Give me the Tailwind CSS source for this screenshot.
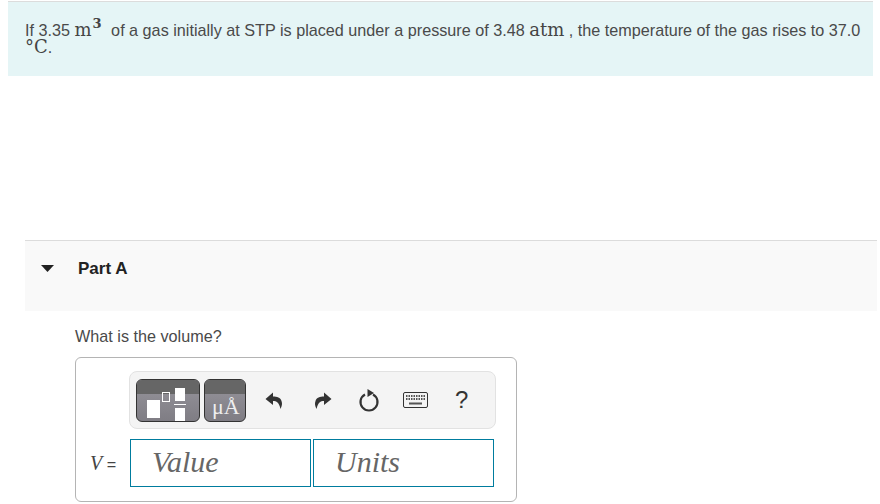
<!DOCTYPE html>
<html lang="en">
<head>
  <meta charset="UTF-8" />
  <title>Part A</title>
  <script src="https://cdn.jsdelivr.net/npm/@tailwindcss/browser@4"></script>
</head>
<body class="bg-white text-[#4a4a4a] font-['Liberation_Sans',sans-serif] text-[16.2px] overflow-hidden">
  <div class="w-[880px] h-[504px] overflow-hidden pt-px">
    <!-- intro -->
    <div class="ml-2 w-[865px] h-[75px] bg-[#e5f5f6] border-t border-[#dcdcdc] pl-[17px] pt-[18px] leading-[20px]">
      <p class="whitespace-nowrap">If 3.35 <span class="font-['DejaVu_Serif',serif] text-[18px] leading-none text-[#444]">m<sup class="text-[13px] font-bold leading-none -top-[8px] ml-px mr-[5px]">3</sup></span> of a gas initially at STP is placed under a pressure of 3.48 <span class="font-['DejaVu_Serif',serif] text-[18px] leading-none text-[#444]">atm</span> , the temperature of the gas rises to 37.0</p>
      <p class="-mt-[2px] font-['DejaVu_Serif',serif] text-[18px] leading-[18px] text-[#444]">°C<span class="font-['Liberation_Sans',sans-serif] text-[16px]">.</span></p>
    </div>

    <!-- part header -->
    <div class="mt-[164px] ml-[25px] w-[852px] h-[71px] bg-[#f9f9f9] border-t border-[#dcdcdc] flex items-start pt-[18px]">
      <svg class="ml-[16px] mt-[6px] w-[13px] h-[7px]" viewBox="0 0 13 7"><path d="M0 0h13L6.500 7z" fill="#222"/></svg>
      <span class="ml-[24px] font-bold text-[17px] text-[#222] leading-[20px]">Part A</span>
    </div>

    <!-- question -->
    <div class="ml-[75px]">
      <p class="mt-[15px] leading-[20px]">What is the volume?</p>
      <div class="mt-[11px] w-[442px] h-[145px] border border-[#b4b4b4] rounded-[6px] pl-[53px] pt-[13px]">
        <!-- toolbar -->
        <div class="w-[367px] h-[58px] bg-[#f4f4f4] border border-[#e2e2e2] rounded-[8px] flex items-center pl-[6px]">
          <div class="relative w-[64px] h-[43px] rounded-[6px] border border-[#333] overflow-hidden bg-gradient-to-b from-[#97959c] to-[#7f7d84]">
            <div class="h-[14px] bg-[#666]"></div>
            <div class="absolute left-[10px] top-[20px] w-[13px] h-[18px] bg-white"></div>
            <div class="absolute left-[25px] top-[12px] w-[8px] h-[10px] border border-white"></div>
            <div class="absolute left-[38px] top-[8px] w-[10px] h-[13px] bg-white"></div>
            <div class="absolute left-[37px] top-[24px] w-[12px] h-px bg-white"></div>
            <div class="absolute left-[38px] top-[28px] w-[10px] h-[13px] bg-white"></div>
          </div>
          <div class="relative ml-[4px] w-[42px] h-[43px] rounded-[6px] border border-[#333] overflow-hidden bg-gradient-to-b from-[#97959c] to-[#7f7d84]">
            <div class="h-[14px] bg-[#666]"></div>
            <span class="absolute left-[7px] top-[13px] font-['Liberation_Serif',serif] text-[22px] leading-[28px] text-[#eee] whitespace-nowrap">μÅ</span>
          </div>
          <!-- undo -->
          <svg class="ml-[19px] w-[19px] h-[19px]" viewBox="0 0 19 19"><path d="M8 1.500 0.500 8 8 14V10c3.500 0 6 1.500 7.500 8 1.500-3 2-5.500 1-8C15.500 6.500 12 5.500 8 5.500z" fill="#333"/></svg>
          <!-- redo -->
          <svg class="ml-[29px] w-[19px] h-[19px]" viewBox="0 0 19 19"><path d="M11 1.500 18.500 8 11 14V10c-3.500 0-6 1.500-7.500 8-1.500-3-2-5.500-1-8C3.500 6.500 7 5.500 11 5.500z" fill="#333"/></svg>
          <!-- reset -->
          <svg class="ml-[26px] w-[22px] h-[24px]" viewBox="0 0 22 24"><path d="M7 6.500a8.500 8.500 0 1 0 8 0" fill="none" stroke="#333" stroke-width="2.200"/><path d="M9.500 1 16 5l-6.500 4z" fill="#333"/></svg>
          <!-- keyboard -->
          <svg class="ml-[23px] w-[25px] h-[16px]" viewBox="0 0 25 16"><rect x=".5" y=".5" width="24" height="15" rx="1.500" fill="#f4f4f4" stroke="#333"/><path d="M3 4h19M3 7h19" stroke="#555" stroke-width="2" stroke-dasharray="1.500 1"/><path d="M6 11.500h13" stroke="#555" stroke-width="2"/></svg>
          <span class="ml-[27px] text-[24px] leading-none text-[#333]">?</span>
        </div>
        <!-- answer row -->
        <div class="mt-[10px] -ml-[40px] flex items-center">
          <span class="w-[41px] pl-[1px] text-[#444] whitespace-nowrap"><i class="font-['Liberation_Serif',serif] text-[20px]">V</i> =</span>
          <div class="w-[181px] h-[48px] border border-[#007c9e] pl-[21px] font-['Liberation_Serif',serif] italic text-[30px] leading-[44px] text-[#666]">Value</div>
          <div class="ml-[2px] w-[181px] h-[48px] border border-[#007c9e] pl-[21px] font-['Liberation_Serif',serif] italic text-[30px] leading-[44px] text-[#666]">Units</div>
        </div>
      </div>
    </div>
  </div>
</body>
</html>
